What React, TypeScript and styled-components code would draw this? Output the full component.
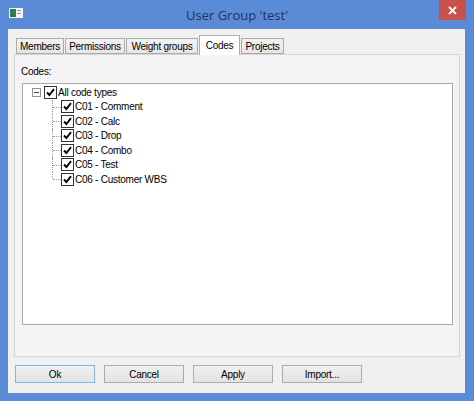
import React from 'react';
import styled, { createGlobalStyle } from 'styled-components';

const GlobalStyle = createGlobalStyle`
  html, body {
    margin: 0;
    padding: 0;
    background: #5b8bd6;
  }
  * {
    box-sizing: border-box;
  }
`;

const Frame = styled.div`
  width: 474px;
  height: 401px;
  display: flex;
  flex-direction: column;
  background: #5b8bd6;
  font-family: 'Liberation Sans', Arial, sans-serif;
  font-size: 10px;
  letter-spacing: -0.25px;
  color: #000000;
`;

const TitleBar = styled.div`
  height: 29px;
  display: flex;
  align-items: flex-start;
  position: relative;
  flex-shrink: 0;
`;

const AppIcon = styled.svg`
  margin: 8px 0 0 9px;
`;

const Title = styled.div`
  position: absolute;
  left: 0;
  right: 0;
  top: 6px;
  text-align: center;
  font-family: 'Open Sans', 'Noto Sans', sans-serif;
  font-size: 13px;
  letter-spacing: 0;
  color: #1a3560;
  pointer-events: none;
`;

const CloseButton = styled.div`
  position: absolute;
  top: 0;
  left: 439px;
  width: 27px;
  height: 20px;
  background: #c9514b;
  display: flex;
  align-items: center;
  justify-content: center;
`;

const Client = styled.div`
  flex: 1;
  margin: 0 9px 9px 8px;
  background: #f0f0f0;
  padding: 6px 5px 10px 6px;
  display: flex;
  flex-direction: column;
`;

const TabBar = styled.div`
  display: flex;
  align-items: flex-end;
  height: 19px;
  padding-left: 2px;
  position: relative;
  z-index: 1;
`;

const Tab = styled.div<{ $active?: boolean; $width: number }>`
  width: ${(p) => p.$width}px;
  height: ${(p) => (p.$active ? 20 : 16)}px;
  margin-bottom: ${(p) => (p.$active ? -1 : 0)}px;
  margin-right: 1px;
  border: 1px solid #acacac;
  border-bottom: ${(p) => (p.$active ? 'none' : '1px solid #acacac')};
  background: ${(p) => (p.$active ? '#ffffff' : 'linear-gradient(#f2f2f2, #e6e6e6)')};
  display: flex;
  align-items: center;
  justify-content: center;
  padding-top: ${(p) => (p.$active ? 0 : 1)}px;
  white-space: nowrap;
`;

const Pane = styled.div`
  height: 303px;
  border: 1px solid #d5d5d5;
  background: #f4f4f4;
  padding: 8px 6px 31px 6px;
  display: flex;
  flex-direction: column;
`;

const FieldLabel = styled.div`
  height: 20px;
  line-height: 17px;
`;

const TreeBox = styled.div`
  flex: 1;
  margin-left: 1px;
  background: #ffffff;
  border: 1px solid #a9a9a9;
  padding-top: 1px;
`;

const Row = styled.div<{ $indent: number }>`
  height: 14.5px;
  display: flex;
  align-items: center;
  padding-left: ${(p) => p.$indent}px;
`;

const Expander = styled.span`
  width: 9px;
  height: 9px;
  border: 1px solid #919191;
  background: #ffffff;
  margin-right: 3px;
  position: relative;
  &::after {
    content: '';
    position: absolute;
    left: 1px;
    top: 3px;
    width: 5px;
    height: 1px;
    background: #3a3a3a;
  }
`;

const Branch = styled.span<{ $last?: boolean }>`
  align-self: stretch;
  width: 9px;
  position: relative;
  &::before {
    content: '';
    position: absolute;
    left: 0;
    top: 0;
    height: ${(p) => (p.$last ? '50%' : '100%')};
    border-left: 1px dotted #9a9a9a;
  }
  &::after {
    content: '';
    position: absolute;
    left: 1px;
    right: 0;
    top: 50%;
    border-top: 1px dotted #9a9a9a;
  }
`;

const Check = styled.span`
  width: 13px;
  height: 13px;
  border: 1px solid #333333;
  background: #ffffff;
  display: flex;
  align-items: center;
  justify-content: center;
  margin-right: 1px;
  flex-shrink: 0;
`;

const ItemText = styled.span`
  white-space: nowrap;
`;

const ButtonRow = styled.div`
  display: flex;
  gap: 9px;
  margin-top: 8px;
  padding-left: 1px;
`;

const Button = styled.button<{ $default?: boolean }>`
  width: 80px;
  height: 18px;
  padding: 0;
  font-family: inherit;
  font-size: 10px;
  letter-spacing: -0.25px;
  color: #000000;
  border: 1px solid ${(p) => (p.$default ? '#7eb4ea' : '#acacac')};
  background: linear-gradient(#f0f0f0, #e3e3e3);
  cursor: pointer;
`;

const CheckMark = () => (
  <svg width="9" height="9" viewBox="0 0 9 9">
    <path d="M1 4.5 L3.4 7 L8 1.2" fill="none" stroke="#000" strokeWidth="1.9" />
  </svg>
);

const codes = ['C01 - Comment', 'C02 - Calc', 'C03 - Drop', 'C04 - Combo', 'C05 - Test', 'C06 - Customer WBS'];

const tabs = [
  { name: 'Members', width: 48 },
  { name: 'Permissions', width: 60 },
  { name: 'Weight groups', width: 72 },
  { name: 'Codes', width: 41, active: true },
  { name: 'Projects', width: 43 },
];

const App = () => {
  return (
    <Frame>
      <GlobalStyle />
      <TitleBar>
        <AppIcon width="14" height="10" viewBox="0 0 14 10">
          <rect x="0" y="0" width="14" height="10" fill="#f4f4f4" />
          <rect x="1" y="1" width="6" height="8" fill="#2f7d4a" />
          <rect x="8" y="2" width="4" height="1" fill="#9a9a9a" />
          <rect x="8" y="5" width="4" height="1" fill="#9a9a9a" />
        </AppIcon>
        <Title>User Group 'test'</Title>
        <CloseButton>
          <svg width="9" height="9" viewBox="0 0 9 9">
            <path d="M1 1 L8 8 M8 1 L1 8" stroke="#ffffff" strokeWidth="1.8" />
          </svg>
        </CloseButton>
      </TitleBar>
      <Client>
        <TabBar>
          {tabs.map((t) => (
            <Tab key={t.name} $active={t.active} $width={t.width}>
              {t.name}
            </Tab>
          ))}
        </TabBar>
        <Pane>
          <FieldLabel>Codes:</FieldLabel>
          <TreeBox>
            <Row $indent={9}>
              <Expander />
              <Check>
                <CheckMark />
              </Check>
              <ItemText>All code types</ItemText>
            </Row>
            {codes.map((c, i) => (
              <Row key={c} $indent={29}>
                <Branch $last={i === codes.length - 1} />
                <Check>
                  <CheckMark />
                </Check>
                <ItemText>{c}</ItemText>
              </Row>
            ))}
          </TreeBox>
        </Pane>
        <ButtonRow>
          <Button $default>Ok</Button>
          <Button>Cancel</Button>
          <Button>Apply</Button>
          <Button>Import...</Button>
        </ButtonRow>
      </Client>
    </Frame>
  );
};

export default App;
